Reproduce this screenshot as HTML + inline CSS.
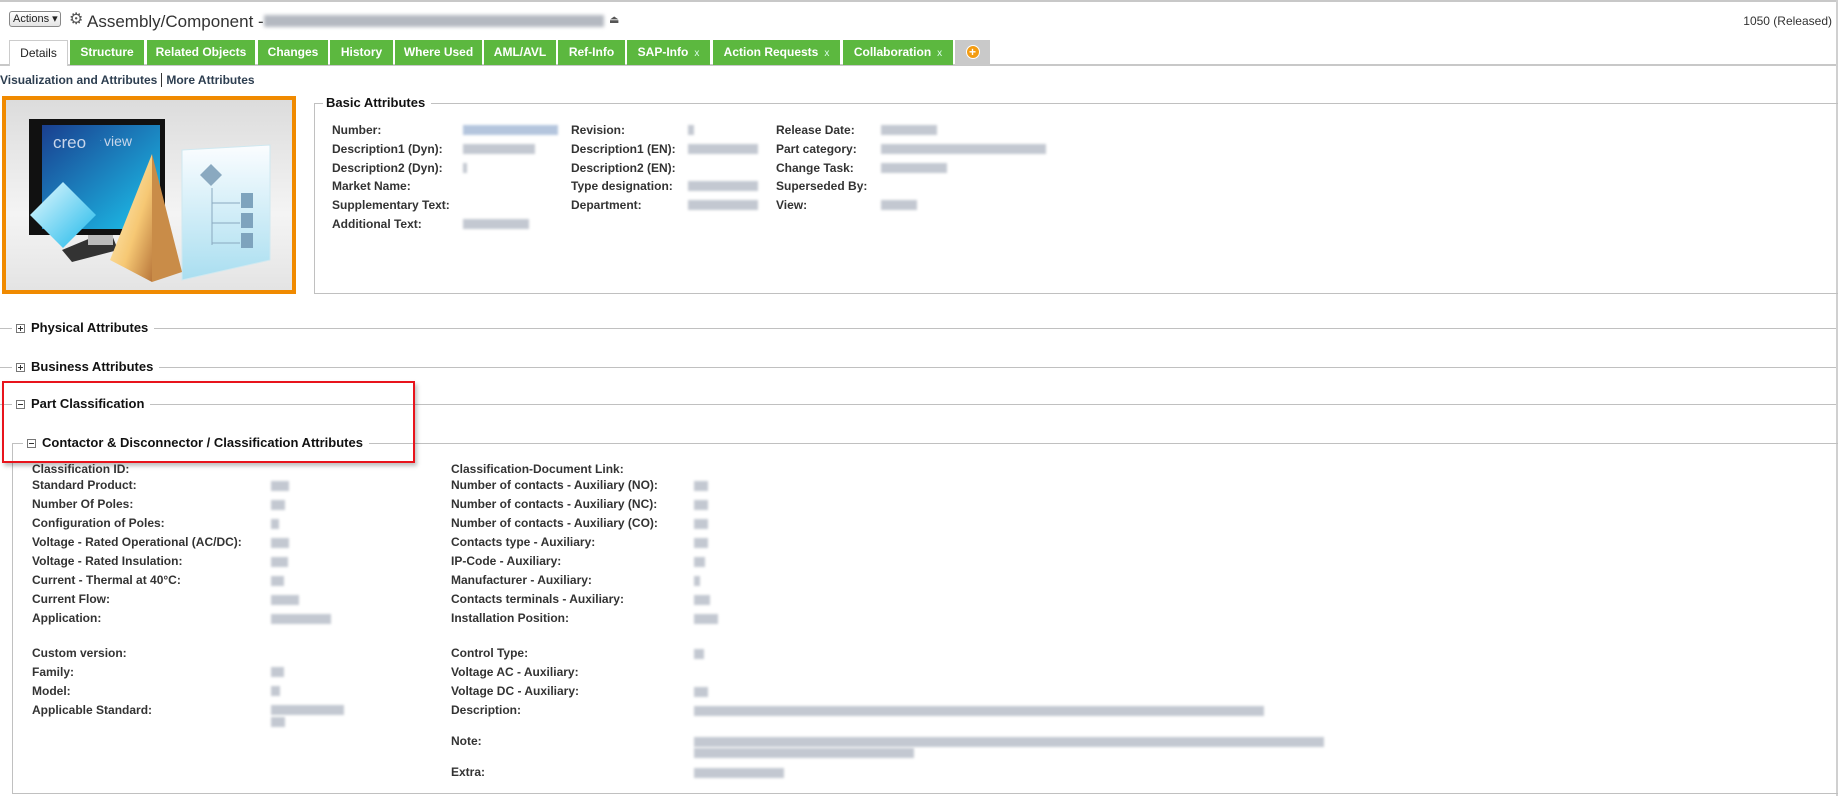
<!DOCTYPE html>
<html><head><meta charset="utf-8"><style>
*{margin:0;padding:0;box-sizing:border-box}
body{width:1838px;height:796px;background:#fff;font-family:"Liberation Sans",Arial,sans-serif;position:relative;overflow:hidden;color:#222}
.a{position:absolute;white-space:nowrap}
.tab{position:absolute;top:40px;height:25px;background:#5cb83f;color:#fff;font-weight:bold;font-size:12px;line-height:25px;text-align:center}
.tab .x{font-weight:normal;font-size:10px;color:#dfe;margin-left:6px}
.lbl{position:absolute;white-space:nowrap;font-size:12px;font-weight:bold;color:#333}
.bl{position:absolute;height:10px;background:#b9bfc9;filter:blur(1.3px);opacity:.85}
.leg{position:absolute;font-size:13px;font-weight:bold;color:#111;background:#fff;padding:0 6px 0 3px;white-space:nowrap}
.hl{position:absolute;height:1px;background:#c0c0c0}
.pm{display:inline-block;width:9px;height:9px;border:1px solid #777;position:relative;margin-right:6px;vertical-align:-1px}
.pm:before{content:"";position:absolute;left:1px;top:3px;width:5px;height:1px;background:#333}
.pm.p:after{content:"";position:absolute;left:3px;top:1px;width:1px;height:5px;background:#333}
</style></head><body>
<div class="a" style="left:0;top:0;width:1838px;height:2px;background:#c8c8c8"></div>
<div class="a" style="left:1836px;top:0;width:2px;height:796px;background:#d0d0d0"></div>
<div class="a" style="left:9px;top:11px;width:52px;height:16px;border:1px solid #888;border-radius:3px;background:linear-gradient(#fff,#e4e4e4);font-size:11px;line-height:14px;padding-left:3px">Actions ▾</div>
<div class="a" style="left:69px;top:9px;font-size:16px;color:#555">⚙</div>
<div class="a" style="left:87px;top:12px;font-size:17px;color:#333">Assembly/Component -</div>
<div class="a" style="left:264px;top:15px;width:340px;height:12px;background:#b4b9c1;filter:blur(1.8px)"></div>
<div class="a" style="left:609px;top:13px;font-size:11px;color:#555">⏏</div>
<div class="a" style="right:6px;top:14px;font-size:12px;color:#333">1050 (Released)</div>

<div class="a" style="left:0;top:64px;width:1836px;height:2px;background:#c8c8c8"></div>
<div class="tab" style="left:9px;width:59px;background:#fff;color:#222;border:1px solid #ccc;border-bottom:none;height:26px;font-weight:normal">Details</div>
<div class="tab" style="left:70px;width:74px">Structure</div>
<div class="tab" style="left:147px;width:108px">Related Objects</div>
<div class="tab" style="left:258px;width:70px">Changes</div>
<div class="tab" style="left:330px;width:63px">History</div>
<div class="tab" style="left:395px;width:87px">Where Used</div>
<div class="tab" style="left:484px;width:72px">AML/AVL</div>
<div class="tab" style="left:558px;width:67px">Ref-Info</div>
<div class="tab" style="left:627px;width:83px">SAP-Info<span class="x">x</span></div>
<div class="tab" style="left:713px;width:127px">Action Requests<span class="x">x</span></div>
<div class="tab" style="left:843px;width:110px">Collaboration<span class="x">x</span></div>
<div class="tab" style="left:955px;width:35px;background:#c9c9c9"><span style="display:inline-block;width:14px;height:14px;border-radius:50%;background:#f39c12;border:1px solid #fff;color:#fff;font-size:12px;line-height:12px;margin-top:5px">+</span></div>

<div class="a" style="left:0;top:73px;font-size:12px;font-weight:bold;color:#2d3e50">Visualization and Attributes<span style="border-left:1px solid #333;margin:0 4px"></span>More Attributes</div>

<div class="a" style="left:2px;top:96px;width:294px;height:198px;border:4px solid #f08a00;background:linear-gradient(#dcdcdc,#f4f4f4 60%,#e4e4e4)"></div>
<svg class="a" style="left:0;top:90px" width="310" height="210" viewBox="0 0 310 210">
<defs><linearGradient id="s" x1="0" y1="0" x2="1" y2="1"><stop offset="0" stop-color="#1a3f8f"/><stop offset="1" stop-color="#1cc6ee"/></linearGradient>
<linearGradient id="p" x1="0" y1="0" x2="1" y2="1"><stop offset="0" stop-color="#fff6d0"/><stop offset=".6" stop-color="#f6c874"/><stop offset="1" stop-color="#b8763a"/></linearGradient>
<linearGradient id="d" x1="0" y1="0" x2="0" y2="1"><stop offset="0" stop-color="#fbfdff"/><stop offset="1" stop-color="#a9def0"/></linearGradient>
<linearGradient id="m" x1="0" y1="0" x2="1" y2="1"><stop offset="0" stop-color="#e8faff"/><stop offset="1" stop-color="#1cb8ea"/></linearGradient></defs>
<polygon points="62,160 110,140 118,160 72,172" fill="#333"/>
<rect x="88" y="135" width="25" height="20" fill="#bbb"/>
<rect x="29" y="29" width="136" height="116" fill="#111"/>
<rect x="42" y="35" width="118" height="104" fill="url(#s)"/>
<text x="53" y="58" font-family="Liberation Sans" font-size="17" fill="#c8d6ea">creo</text><text x="100" y="52" font-size="5" fill="#c8d6ea">·</text><text x="104" y="56" font-family="Liberation Sans" font-size="14" fill="#c8d6ea">view</text>
<polygon points="63,92 96,125 63,158 30,125" fill="url(#m)"/>
<polygon points="182,60 270,55 270,170 182,190" fill="url(#d)" stroke="#cfe8f0"/>
<polygon points="211,74 222,85 211,96 200,85" fill="#8aa9c0"/>
<path d="M212,98V155M212,113H240M212,133H240M212,153H240" stroke="#8aa9c0" fill="none"/>
<rect x="241" y="103" width="12" height="15" fill="#7ea3bd"/><rect x="241" y="123" width="12" height="15" fill="#7ea3bd"/><rect x="241" y="143" width="12" height="15" fill="#7ea3bd"/>
<polygon points="152,64 110,170 152,192" fill="url(#p)"/>
<polygon points="152,64 152,192 182,182" fill="#c98c48"/>
</svg>

<div class="a" style="left:314px;top:103px;width:1530px;height:191px;border:1px solid #c0c0c0"></div>
<div class="leg" style="left:323px;top:95px">Basic Attributes</div>
<div class="lbl" style="left:332px;top:123px">Number:</div>
<div class="lbl" style="left:332px;top:142px">Description1 (Dyn):</div>
<div class="lbl" style="left:332px;top:161px">Description2 (Dyn):</div>
<div class="lbl" style="left:332px;top:179px">Market Name:</div>
<div class="lbl" style="left:332px;top:198px">Supplementary Text:</div>
<div class="lbl" style="left:332px;top:217px">Additional Text:</div>
<div class="bl" style="left:463px;top:125px;width:95px;background:#a8bcd8"></div>
<div class="bl" style="left:463px;top:144px;width:72px"></div>
<div class="bl" style="left:463px;top:163px;width:4px"></div>
<div class="bl" style="left:463px;top:219px;width:66px"></div>
<div class="lbl" style="left:571px;top:123px">Revision:</div>
<div class="lbl" style="left:571px;top:142px">Description1 (EN):</div>
<div class="lbl" style="left:571px;top:161px">Description2 (EN):</div>
<div class="lbl" style="left:571px;top:179px">Type designation:</div>
<div class="lbl" style="left:571px;top:198px">Department:</div>
<div class="bl" style="left:688px;top:125px;width:6px"></div>
<div class="bl" style="left:688px;top:144px;width:70px"></div>
<div class="bl" style="left:688px;top:181px;width:70px"></div>
<div class="bl" style="left:688px;top:200px;width:70px"></div>
<div class="lbl" style="left:776px;top:123px">Release Date:</div>
<div class="lbl" style="left:776px;top:142px">Part category:</div>
<div class="lbl" style="left:776px;top:161px">Change Task:</div>
<div class="lbl" style="left:776px;top:179px">Superseded By:</div>
<div class="lbl" style="left:776px;top:198px">View:</div>
<div class="bl" style="left:881px;top:125px;width:56px"></div>
<div class="bl" style="left:881px;top:144px;width:165px"></div>
<div class="bl" style="left:881px;top:163px;width:66px"></div>
<div class="bl" style="left:881px;top:200px;width:36px"></div>

<div class="hl" style="left:0;top:328px;width:1836px"></div>
<div class="leg" style="left:12px;top:320px;padding-left:4px"><span class="pm p"></span>Physical Attributes</div>
<div class="hl" style="left:0;top:367px;width:1836px"></div>
<div class="leg" style="left:12px;top:359px;padding-left:4px"><span class="pm p"></span>Business Attributes</div>
<div class="hl" style="left:0;top:404px;width:1836px"></div>
<div class="leg" style="left:12px;top:396px;padding-left:4px"><span class="pm"></span>Part Classification</div>

<div class="a" style="left:12px;top:443px;width:1830px;height:351px;border:1px solid #c0c0c0"></div>
<div class="leg" style="left:23px;top:435px;padding-left:4px"><span class="pm"></span>Contactor &amp; Disconnector / Classification Attributes</div>

<div class="a" style="left:2px;top:381px;width:413px;height:82px;border:2px solid #e8141c;box-shadow:2px 3px 4px rgba(0,0,0,.25)"></div>

<div class="lbl" style="left:32px;top:462px">Classification ID:</div>
<div class="lbl" style="left:32px;top:478px">Standard Product:</div>
<div class="lbl" style="left:32px;top:497px">Number Of Poles:</div>
<div class="lbl" style="left:32px;top:516px">Configuration of Poles:</div>
<div class="lbl" style="left:32px;top:535px">Voltage - Rated Operational (AC/DC):</div>
<div class="lbl" style="left:32px;top:554px">Voltage - Rated Insulation:</div>
<div class="lbl" style="left:32px;top:573px">Current - Thermal at 40°C:</div>
<div class="lbl" style="left:32px;top:592px">Current Flow:</div>
<div class="lbl" style="left:32px;top:611px">Application:</div>
<div class="lbl" style="left:32px;top:646px">Custom version:</div>
<div class="lbl" style="left:32px;top:665px">Family:</div>
<div class="lbl" style="left:32px;top:684px">Model:</div>
<div class="lbl" style="left:32px;top:703px">Applicable Standard:</div>
<div class="bl" style="left:271px;top:481px;width:18px"></div>
<div class="bl" style="left:271px;top:500px;width:14px"></div>
<div class="bl" style="left:271px;top:519px;width:8px"></div>
<div class="bl" style="left:271px;top:538px;width:18px"></div>
<div class="bl" style="left:271px;top:557px;width:17px"></div>
<div class="bl" style="left:271px;top:576px;width:13px"></div>
<div class="bl" style="left:271px;top:595px;width:28px"></div>
<div class="bl" style="left:271px;top:614px;width:60px"></div>
<div class="bl" style="left:271px;top:667px;width:13px"></div>
<div class="bl" style="left:271px;top:686px;width:9px"></div>
<div class="bl" style="left:271px;top:705px;width:73px"></div>
<div class="bl" style="left:271px;top:717px;width:14px"></div>

<div class="lbl" style="left:451px;top:462px">Classification-Document Link:</div>
<div class="lbl" style="left:451px;top:478px">Number of contacts - Auxiliary (NO):</div>
<div class="lbl" style="left:451px;top:497px">Number of contacts - Auxiliary (NC):</div>
<div class="lbl" style="left:451px;top:516px">Number of contacts - Auxiliary (CO):</div>
<div class="lbl" style="left:451px;top:535px">Contacts type - Auxiliary:</div>
<div class="lbl" style="left:451px;top:554px">IP-Code - Auxiliary:</div>
<div class="lbl" style="left:451px;top:573px">Manufacturer - Auxiliary:</div>
<div class="lbl" style="left:451px;top:592px">Contacts terminals - Auxiliary:</div>
<div class="lbl" style="left:451px;top:611px">Installation Position:</div>
<div class="lbl" style="left:451px;top:646px">Control Type:</div>
<div class="lbl" style="left:451px;top:665px">Voltage AC - Auxiliary:</div>
<div class="lbl" style="left:451px;top:684px">Voltage DC - Auxiliary:</div>
<div class="lbl" style="left:451px;top:703px">Description:</div>
<div class="lbl" style="left:451px;top:734px">Note:</div>
<div class="lbl" style="left:451px;top:765px">Extra:</div>
<div class="bl" style="left:694px;top:481px;width:14px"></div>
<div class="bl" style="left:694px;top:500px;width:14px"></div>
<div class="bl" style="left:694px;top:519px;width:14px"></div>
<div class="bl" style="left:694px;top:538px;width:14px"></div>
<div class="bl" style="left:694px;top:557px;width:11px"></div>
<div class="bl" style="left:694px;top:576px;width:6px"></div>
<div class="bl" style="left:694px;top:595px;width:16px"></div>
<div class="bl" style="left:694px;top:614px;width:24px"></div>
<div class="bl" style="left:694px;top:649px;width:10px"></div>
<div class="bl" style="left:694px;top:687px;width:14px"></div>
<div class="bl" style="left:694px;top:706px;width:570px"></div>
<div class="bl" style="left:694px;top:737px;width:630px"></div>
<div class="bl" style="left:694px;top:748px;width:220px"></div>
<div class="bl" style="left:694px;top:768px;width:90px"></div>
</body></html>
